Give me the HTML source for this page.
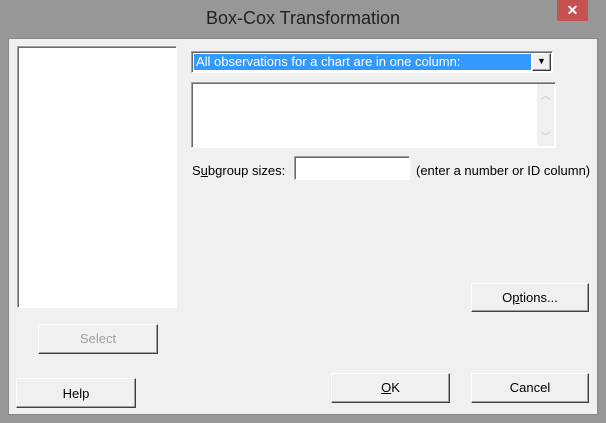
<!DOCTYPE html>
<html><head><style>
*{margin:0;padding:0;box-sizing:border-box}
body{width:606px;height:423px;background:#979797;position:relative;font-family:"Liberation Sans",sans-serif;font-size:13px;color:#000;overflow:hidden}
.title{position:absolute;left:0;right:0;top:8px;text-align:center;font-size:18px;color:#222}
.close{position:absolute;left:557px;top:0;width:31px;height:21px;background:#c75050;color:#fff;text-align:center;font-size:14px;line-height:21px;font-weight:bold}
.client{position:absolute;left:8px;top:38px;width:590px;height:377px;background:#f0f0f0;border:1px solid #888}
.a{position:absolute}
.sunk{border:1px solid #a0a0a0;border-right-color:#fff;border-bottom-color:#fff;box-shadow:inset 1px 1px 0 #696969;background:#fff}
.btn{position:absolute;background:#f0f0f0;border:1px solid #fff;border-right-color:#404040;border-bottom-color:#404040;box-shadow:inset -1px -1px 0 #a0a0a0;text-align:center;font-size:13px}
</style></head><body>
<div class="title">Box-Cox Transformation</div>
<div class="close">✕</div>
<div class="client"></div>
<div class="a sunk" style="left:17px;top:46px;width:160px;height:262px"></div>
<div class="a sunk" style="left:191px;top:51px;width:362px;height:22px;background:#fff">
 <div class="a" style="left:2px;top:2px;width:337px;height:16px;background:#3399ff;color:#fff;padding-left:2px;line-height:16px">All observations for a chart are in one column:</div>
 <div class="btn" style="left:340px;top:1px;width:19px;height:18px;line-height:14px;font-size:9px">▼</div>
</div>
<div class="a sunk" style="left:191px;top:82px;width:365px;height:66px">
 <div class="a" style="right:1px;top:1px;width:17px;height:62px;background:#f0f0f0;color:#c0c0c0;font-size:10px;text-align:center">
  <div style="margin-top:3px">︿</div><div style="margin-top:26px">﹀</div></div>
</div>
<div class="a" style="left:192px;top:163px">S<u>u</u>bgroup sizes:</div>
<div class="a sunk" style="left:294px;top:156px;width:116px;height:24px"></div>
<div class="a" style="left:416px;top:163px">(enter a number or ID column)</div>
<div class="btn" style="left:471px;top:283px;width:118px;height:29px;line-height:27px">O<u>p</u>tions...</div>
<div class="btn" style="left:38px;top:324px;width:120px;height:30px;line-height:28px;color:#a0a0a0">Select</div>
<div class="btn" style="left:16px;top:378px;width:120px;height:30px;line-height:30px">Help</div>
<div class="btn" style="left:331px;top:373px;width:119px;height:30px;line-height:28px"><u>O</u>K</div>
<div class="btn" style="left:471px;top:373px;width:118px;height:30px;line-height:28px">Cancel</div>
</body></html>
